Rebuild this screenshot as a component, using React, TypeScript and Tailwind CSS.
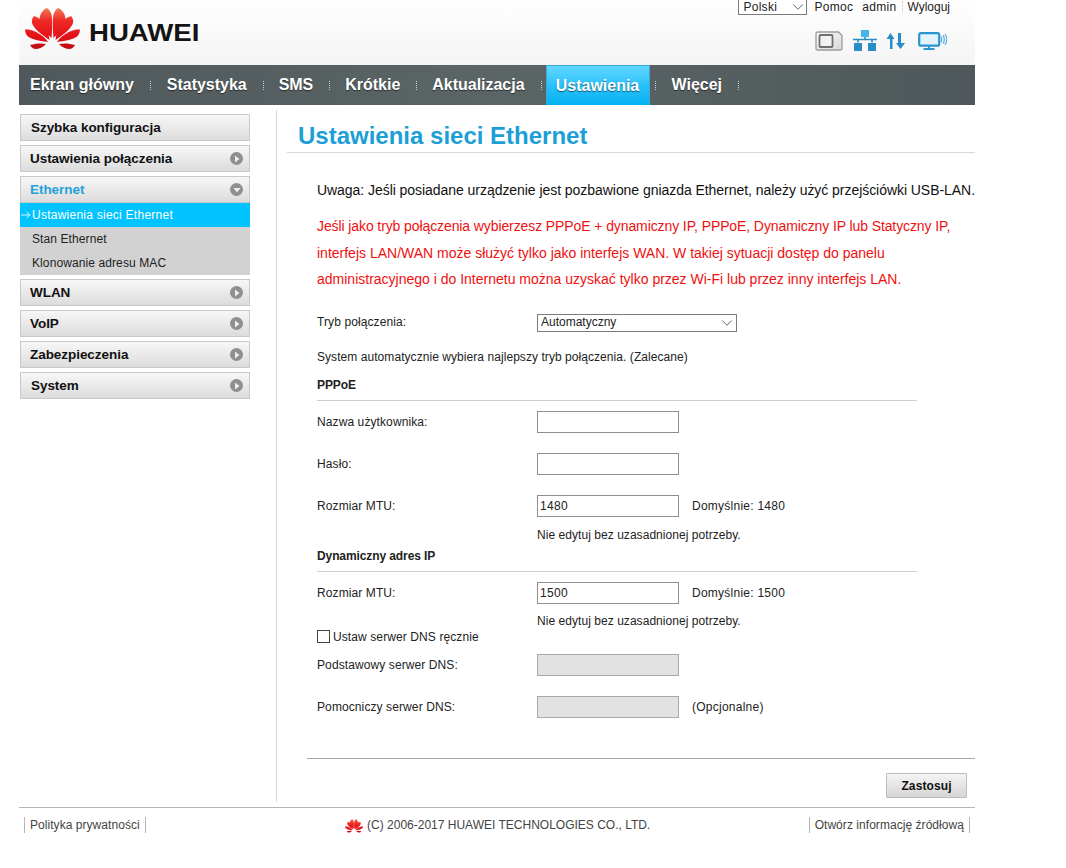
import React from 'react';
import { ChevronDown } from 'lucide-react';

const Logo = ({ className }: { className: string }) => {
  const left = [
    'M26.5 30C18 22 13 14 15 8 16 4 19 1 22 0c3 2 5 6 5 10 .5 6 0 14-.5 20z',
    'M24.5 32C17 27 9 21 7 15c-.5-3 .5-5.500 2-7 5 1.500 9 5 11.500 10 2 4 3.500 9 4 14z',
    'M23 34c-7-1-15-2-20-5.500-2-1.500-2.700-4-3-7 6-.5 12 2.500 16 5.500 3 2 5.500 4.500 7 7z',
    'M21 36c-3 3.500-7 5-10.500 5-2 0-4-1.500-5.500-4 5-1.500 11-2 16-1z',
  ];
  return (
    <svg viewBox="0 0 55 42" className={className}>
      <defs>
        <linearGradient id="petal" gradientUnits="userSpaceOnUse" x1="0" y1="0" x2="0" y2="42">
          <stop offset="0" stopColor="#f47a5c" />
          <stop offset="0.3" stopColor="#ee2a24" />
          <stop offset="0.7" stopColor="#e30f18" />
          <stop offset="1" stopColor="#b80c12" />
        </linearGradient>
      </defs>
      {left.map((d) => (
        <g key={d}>
          <path d={d} fill="url(#petal)" />
          <path d={d} fill="url(#petal)" transform="matrix(-1 0 0 1 55 0)" />
        </g>
      ))}
    </svg>
  );
};

const Separator = ({ narrow }: { narrow?: boolean }) => (
  <div className={`flex items-center pl-[5px] ${narrow ? 'w-[10px]' : 'w-[11px]'}`}>
    <div className="h-[9px] w-px border-l border-dotted border-[#c9cdce]" />
  </div>
);

const NavItem = ({ label, active }: { label: string; active?: boolean }) => (
  <div
    className={
      active
        ? 'flex h-10 w-[104px] items-center justify-center border-x border-t border-[#3ba9d6] bg-gradient-to-b from-[#5fd7ff] via-[#27c1fb] to-[#00b2f1] text-white'
        : 'flex h-10 items-center px-[11px] text-white'
    }
  >
    <span className="[text-shadow:0_1px_1px_rgba(0,0,0,0.55)]">{label}</span>
  </div>
);

const Arrow = ({ down }: { down?: boolean }) => (
  <span className="mr-[6px] flex h-[13px] w-[13px] items-center justify-center rounded-full bg-[#8f8f8f]">
    <svg viewBox="0 0 8 8" className="h-2 w-2">
      <path d={down ? 'M0.5 2h7L4 6.5z' : 'M2 .5v7L6.5 4z'} fill="#eeeeee" />
    </svg>
  </span>
);

const SideItem = ({ label, color, arrow, down, pad }: { label: string; color?: string; arrow?: boolean; down?: boolean; pad?: string }) => (
  <div className={`flex h-[27px] items-center justify-between border border-[#c9c9c9] bg-gradient-to-b from-[#f7f7f7] to-[#dcdcdc] ${pad ?? 'pl-[9px]'}`}>
    <span className={`text-[13.5px] font-bold leading-[16px] tracking-[-0.05px] ${color ?? 'text-[#111]'}`}>{label}</span>
    {arrow && <Arrow down={down} />}
  </div>
);

const FormRow = ({ label, value, note, disabled, className }: { label: string; value?: string; note?: string; disabled?: boolean; className?: string }) => (
  <div className={`flex h-[22px] items-center ${className ?? ''}`}>
    <div className="w-[220px]">{label}</div>
    <div
      className={
        disabled
          ? 'flex h-[22px] w-[142px] items-center border border-[#a9a9a9] bg-[#e2e2e2] px-[2px]'
          : 'flex h-[22px] w-[142px] items-center border border-[#8f8f8f] bg-white px-[2px] tracking-[0.3px]'
      }
    >
      {value}
    </div>
    {note && <div className="ml-[13px] tracking-[0.25px]">{note}</div>}
  </div>
);

const SubHeading = ({ label, className }: { label: string; className: string }) => (
  <div className={`mr-[58px] border-b border-[#cfcfcf] font-bold tracking-[-0.1px] ${className}`}>{label}</div>
);

const App: React.FC = () => {
  return (
    <div className="ml-[19px] w-[956px] overflow-hidden text-[12px] tracking-[0.1px] text-[#222] [font-family:'Liberation_Sans',Arial,sans-serif]">
      {/* header */}
      <div className="relative h-[65px] bg-gradient-to-b from-white to-[#f4f4f4]">
        <div className="flex items-center pl-[6px] pt-[8px]">
          <Logo className="h-[42px] w-[55px] shrink-0" />
          <span className="ml-[9px] mt-[7px] origin-left scale-x-[1.15] text-[24px] font-bold leading-none tracking-normal text-[#141414]">HUAWEI</span>
        </div>
        <div className="absolute -top-[2px] right-[25px] flex items-center">
          <div className="relative -mt-[1px] flex h-[16px] w-[69px] items-center border border-[#7a7a7a] bg-white pl-1 tracking-[0.3px]">
            Polski
            <ChevronDown size={18} strokeWidth={1.1} className="absolute right-[-1px] top-1/2 -translate-y-1/2 text-[#444]" />
          </div>
          <span className="ml-[7px] tracking-[0.3px]">Pomoc</span>
          <span className="ml-[9px] tracking-[0.3px]">admin</span>
          <span className="ml-[6px] mr-[4px] h-[12px] border-l border-dotted border-[#c4c4c4]" />
          <span className="tracking-normal">Wyloguj</span>
        </div>
        <div className="absolute left-[796px] top-[30px] flex items-center">
          <svg viewBox="0 0 28 20" className="h-5 w-[28px]">
            <defs>
              <linearGradient id="sim" x1="0" y1="0" x2="1" y2="1">
                <stop offset="0" stopColor="#fafafa" />
                <stop offset="1" stopColor="#d8d8d8" />
              </linearGradient>
            </defs>
            <path d="M2.500 1h21l3.500 3.500V17a2 2 0 0 1-2 2H2.500A1.500 1.500 0 0 1 1 17.500v-15A1.500 1.500 0 0 1 2.500 1z" fill="url(#sim)" stroke="#9d9d9d" strokeWidth="1.300" />
            <rect x="4.500" y="4" width="13" height="12" rx="1" fill="#f2f2f2" stroke="#6f6f6f" strokeWidth="1.800" />
          </svg>
          <svg viewBox="0 0 24 21" className="ml-[10px] h-[21px] w-6">
            <rect x="8" y="0" width="8" height="7" fill="#45b4ea" />
            <path d="M0 9.500h24M5 9.500v3M19 9.500v3M12 7v3" stroke="#2a8cc4" strokeWidth="1.600" fill="none" />
            <rect x="1" y="13" width="8" height="8" fill="#2a8cc4" />
            <rect x="15" y="13" width="8" height="8" fill="#2a8cc4" />
          </svg>
          <svg viewBox="0 0 19 16" className="ml-[9px] h-4 w-[19px]">
            <path d="M4 16V6H0.500L4.500 0 8.500 6H6.500V16z" fill="#2a8cc4" />
            <path d="M12 0V10H10L14.500 16 19 10H15V0z" fill="#2a8cc4" />
          </svg>
          <svg viewBox="0 0 29 18" className="ml-[13px] h-[18px] w-[29px]">
            <rect x="1.200" y="1.200" width="20" height="12.500" rx="1.800" fill="#e3f3fc" stroke="#2a94d0" strokeWidth="2.200" />
            <path d="M11 14v2.500M5.500 17h11" stroke="#2a94d0" strokeWidth="1.800" />
            <path d="M23 4.500c1 1.800 1 4 0 5.800M25 3.200c1.700 2.600 1.700 5.800 0 8.400M27 2c2.200 3.200 2.200 7.600 0 10.800" stroke="#5fb2de" strokeWidth="1.300" fill="none" />
          </svg>
        </div>
      </div>

      {/* main menu */}
      <div className="flex h-10 items-stretch bg-gradient-to-r from-[#4f585b] via-[#5b6566] to-[#4e585a] text-[16px] font-bold tracking-[-0.02px]">
        <NavItem label="Ekran główny" />
        <Separator />
        <NavItem label="Statystyka" />
        <Separator narrow />
        <NavItem label="SMS" />
        <Separator narrow />
        <NavItem label="Krótkie" />
        <Separator narrow />
        <NavItem label="Aktualizacja" />
        <Separator narrow />
        <NavItem label="Ustawienia" active />
        <Separator />
        <NavItem label="Więcej" />
        <Separator />
      </div>

      <div className="flex">
        {/* side menu */}
        <div className="ml-px w-[256px] shrink-0 pt-[9px]">
          <div className="flex w-[230px] flex-col gap-1">
            <SideItem label="Szybka konfiguracja" pad="pl-[10px]" />
            <SideItem label="Ustawienia połączenia" arrow />
            <div>
              <SideItem label="Ethernet" color="text-[#1fa2dc]" arrow down />
              <div className="bg-[#d2d2d2] text-[#222]">
                <div className="flex h-6 items-center bg-[#00c3ff] pl-[1px] tracking-[0.25px] text-white">
                  <svg viewBox="0 0 10 8" className="mr-[1px] h-2 w-[10px]">
                    <path d="M0 4h9M5.500 1l3.500 3-3.500 3" stroke="#eafaff" strokeWidth="0.900" fill="none" />
                  </svg>
                  <span>Ustawienia sieci Ethernet</span>
                </div>
                <div className="flex h-6 items-center pl-3">Stan Ethernet</div>
                <div className="flex h-6 items-center pl-3">Klonowanie adresu MAC</div>
              </div>
            </div>
            <SideItem label="WLAN" arrow />
            <SideItem label="VoIP" arrow />
            <SideItem label="Zabezpieczenia" arrow />
            <SideItem label="System" arrow pad="pl-[10px]" />
          </div>
        </div>

        {/* content */}
        <div className="mt-[5px] h-[692px] min-w-0 flex-1 border-l border-[#d6d6d6] pl-[10px]">
          <div className="h-[43px] border-b border-[#d9d9d9] pl-[11px] pt-[12px] text-[24px] font-bold leading-[28px] tracking-normal text-[#1b9fd6]">
            Ustawienia sieci Ethernet
          </div>
          <div className="pl-[30px]">
            <div className="mt-[27px] whitespace-nowrap text-[14px] leading-[20px] tracking-[-0.05px] text-[#111]">
              Uwaga: Jeśli posiadane urządzenie jest pozbawione gniazda Ethernet, należy użyć przejściówki USB-LAN.
            </div>
            <div className="mt-[13px] whitespace-nowrap text-[14px] leading-[26.5px] tracking-normal text-[#f01010]">
              <div className="tracking-[-0.1px]">Jeśli jako tryb połączenia wybierzesz PPPoE + dynamiczny IP, PPPoE, Dynamiczny IP lub Statyczny IP,</div>
              <div>interfejs LAN/WAN może służyć tylko jako interfejs WAN. W takiej sytuacji dostęp do panelu</div>
              <div>administracyjnego i do Internetu można uzyskać tylko przez Wi-Fi lub przez inny interfejs LAN.</div>
            </div>
            <div className="mt-[21px] flex h-[18px] items-center">
              <div className="w-[220px] pb-px">Tryb połączenia:</div>
              <div className="relative flex h-[18px] w-[200px] items-center border border-[#7a7a7a] bg-white pb-px pl-[3px] tracking-normal">
                Automatyczny
                <ChevronDown size={18} strokeWidth={1.1} className="absolute right-0 top-1/2 -translate-y-1/2 text-[#444]" />
              </div>
            </div>
            <div className="mt-[18px] leading-[14px] tracking-[0.06px]">System automatycznie wybiera najlepszy tryb połączenia. (Zalecane)</div>
            <SubHeading label="PPPoE" className="mt-[14px] h-[23px] leading-[14px]" />
            <FormRow label="Nazwa użytkownika:" className="mt-[10px]" />
            <FormRow label="Hasło:" className="mt-[20px]" />
            <FormRow label="Rozmiar MTU:" value="1480" note="Domyślnie: 1480" className="mt-[20px]" />
            <div className="ml-[220px] mt-[11px] leading-[14px] tracking-[0.05px]">Nie edytuj bez uzasadnionej potrzeby.</div>
            <SubHeading label="Dynamiczny adres IP" className="mt-[6px] h-[24px] pt-px leading-[14px]" />
            <FormRow label="Rozmiar MTU:" value="1500" note="Domyślnie: 1500" className="mt-[10px]" />
            <div className="ml-[220px] mt-[10px] leading-[14px] tracking-[0.05px]">Nie edytuj bez uzasadnionej potrzeby.</div>
            <div className="mt-[2px] flex h-[14px] items-center">
              <div className="mr-[3px] h-[13px] w-[13px] border border-[#444] bg-white" />
              <span>Ustaw serwer DNS ręcznie</span>
            </div>
            <FormRow label="Podstawowy serwer DNS:" disabled className="mt-[10px]" />
            <FormRow label="Pomocniczy serwer DNS:" disabled note="(Opcjonalne)" className="mt-[20px]" />
          </div>
          <div className="ml-[20px] mt-[40px] border-t border-[#a8a8a8]" />
          <div className="mr-[8px] mt-[14px] flex justify-end">
            <button className="h-[25px] w-[81px] rounded-[1px] border border-[#bdbdbd] bg-gradient-to-b from-[#f5f5f5] to-[#d5d5d5] pt-px font-bold text-[#111]">
              Zastosuj
            </button>
          </div>
        </div>
      </div>

      {/* footer */}
      <div className="mt-[5px] flex h-[34px] items-center justify-between border-t border-[#b5b5b5] pl-[5px] pr-[5px] pt-px tracking-[0.05px] text-[#444]">
        <div className="flex h-[16px] items-center border-x border-[#b5b5b5] px-[5px]">Polityka prywatności</div>
        <div className="ml-[41px] flex items-center tracking-normal">
          <Logo className="mr-[4px] mt-[2px] h-[14px] w-[18px]" />
          (C) 2006-2017 HUAWEI TECHNOLOGIES CO., LTD.
        </div>
        <div className="flex h-[16px] items-center border-x border-[#b5b5b5] px-[5px]">Otwórz informację źródłową</div>
      </div>
    </div>
  );
};

export default App;
